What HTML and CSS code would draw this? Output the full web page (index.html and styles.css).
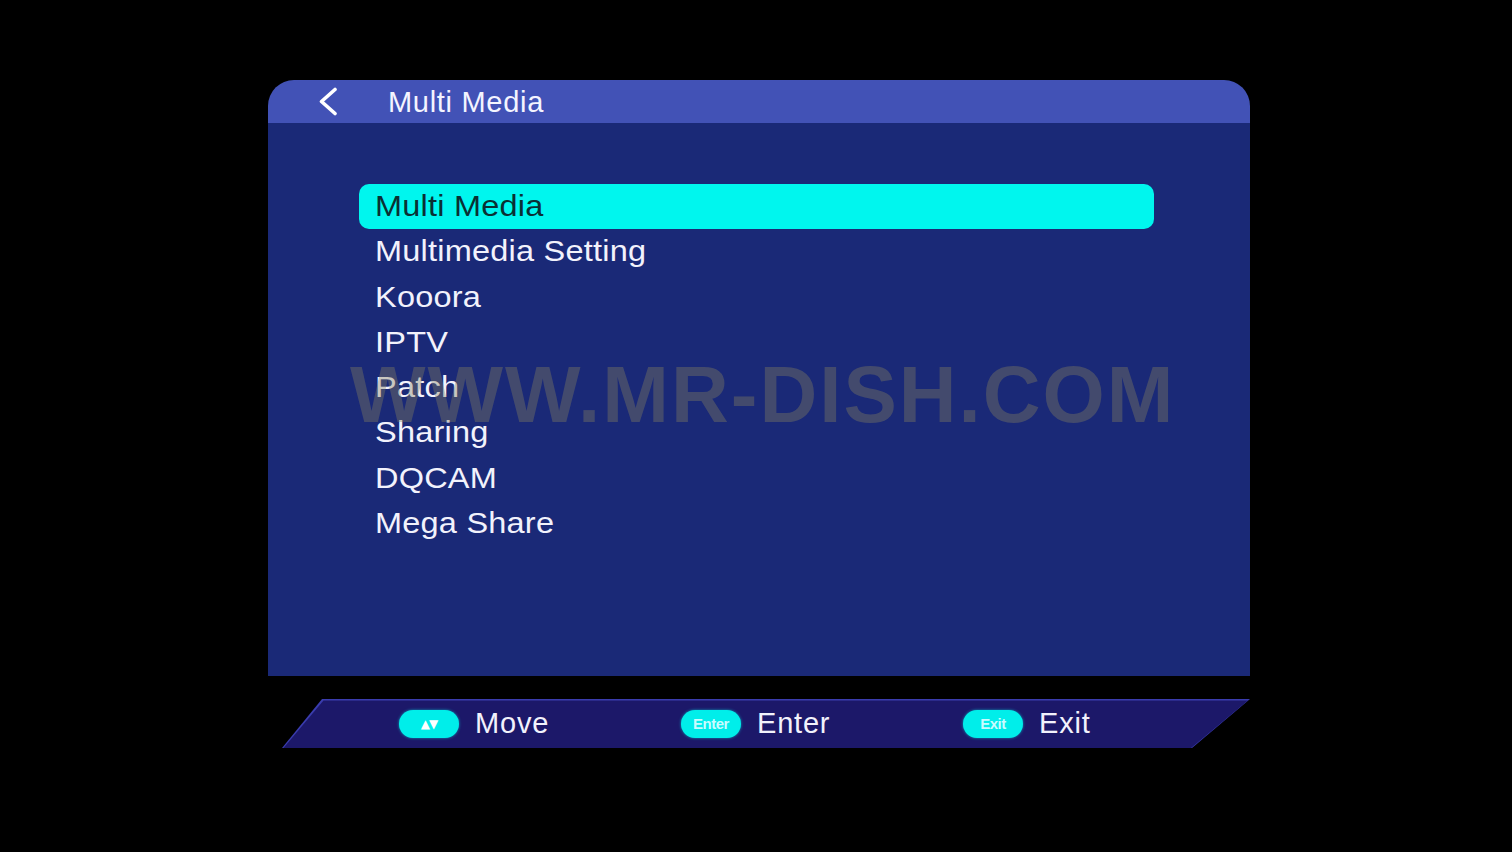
FILE: index.html
```html
<!DOCTYPE html>
<html>
<head>
<meta charset="utf-8">
<link rel="stylesheet" href="styles.css">
</head>
<body>
<div class="screen">
  <div class="panel">
    <div class="header">
      <svg class="back" width="24" height="30" viewBox="0 0 24 30">
        <path d="M19 2.5 L5.5 14.5 L19 26.5" fill="none" stroke="#ffffff" stroke-width="3.6" stroke-linecap="round" stroke-linejoin="round"/>
      </svg>
      <span class="title">Multi Media</span>
    </div>
    <div class="body">
      <ul class="menu">
        <li class="item active"><span class="txt">Multi Media</span></li>
        <li class="item"><span class="txt">Multimedia Setting</span></li>
        <li class="item"><span class="txt">Kooora</span></li>
        <li class="item"><span class="txt">IPTV</span></li>
        <li class="item"><span class="txt">Patch</span></li>
        <li class="item"><span class="txt">Sharing</span></li>
        <li class="item"><span class="txt">DQCAM</span></li>
        <li class="item"><span class="txt">Mega Share</span></li>
      </ul>
    </div>
    <div class="watermark">WWW.MR-DISH.COM</div>
  </div>
  <div class="footer">
    <div class="hint">
      <span class="pill"><span class="tri">&#9650;&#9660;</span></span>
      <span class="label">Move</span>
    </div>
    <div class="hint">
      <span class="pill"><span class="key">Enter</span></span>
      <span class="label">Enter</span>
    </div>
    <div class="hint">
      <span class="pill"><span class="key">Exit</span></span>
      <span class="label">Exit</span>
    </div>
  </div>
</div>
</body>
</html>
```
FILE: styles.css
```css
html, body {
  margin: 0;
  padding: 0;
  background: #000000;
}
body {
  width: 1512px;
  height: 852px;
  overflow: hidden;
  font-family: "Liberation Sans", Arial, sans-serif;
}
.screen {
  padding-top: 80px;
  padding-left: 268px;
}
.panel {
  position: relative;
  width: 982px;
}
.header {
  height: 43px;
  background: #4252b6;
  border-radius: 26px 26px 0 0;
  display: flex;
  align-items: center;
  padding-left: 48px;
  gap: 48px;
}
.back {
  display: block;
}
.title {
  color: #f4f4ff;
  font-size: 29px;
  letter-spacing: 0.7px;
  padding-top: 2px;
}
.body {
  height: 553px;
  background: #1a2977;
  padding-top: 61px;
  box-sizing: border-box;
}
.menu {
  list-style: none;
  margin: 0 0 0 91px;
  padding: 0;
  width: 795px;
}
.item {
  height: 45.3px;
  line-height: 45.3px;
  padding-left: 16px;
  font-size: 29px;
  color: #f2f2fc;
}
.txt {
  display: inline-block;
  transform: scaleX(1.12);
  transform-origin: left center;
  letter-spacing: 0.2px;
}
.item.active {
  background: #00f6ee;
  color: #0a3034;
  border-radius: 10px;
}
.watermark {
  position: absolute;
  left: 82px;
  top: 275px;
  font-size: 80px;
  line-height: 80px;
  font-weight: bold;
  letter-spacing: 2px;
  color: rgba(135, 128, 95, 0.38);
  white-space: nowrap;
  pointer-events: none;
}
.footer {
  position: relative;
  margin-top: 23px;
  margin-left: 14px;
  width: 968px;
  height: 49px;
  background: #3a3cae;
  clip-path: polygon(40px 0, 100% 0, calc(100% - 58px) 100%, 0 100%);
  display: flex;
  align-items: center;
  padding-left: 117px;
  box-sizing: border-box;
}
.footer::before {
  content: "";
  position: absolute;
  inset: 0;
  background: #1c1869;
  clip-path: polygon(41.5px 1.5px, calc(100% - 2px) 1.5px, calc(100% - 59px) 100%, 1.5px 100%);
}
.hint {
  position: relative;
  width: 282px;
  display: flex;
  align-items: center;
  gap: 16px;
}
.pill {
  width: 60px;
  height: 28px;
  border-radius: 14px;
  background: #00eeea;
  box-shadow: 0 0 3px rgba(0, 240, 240, 0.6);
  display: flex;
  align-items: center;
  justify-content: center;
}
.tri {
  color: #ffffff;
  font-family: "DejaVu Sans", sans-serif;
  font-size: 12px;
  letter-spacing: -1px;
  line-height: 1;
}
.key {
  color: #c9fbff;
  font-size: 15px;
  font-weight: bold;
  line-height: 1;
  letter-spacing: -0.5px;
}
.label {
  color: #f2f2fc;
  font-size: 29px;
  letter-spacing: 0.8px;
}
```
